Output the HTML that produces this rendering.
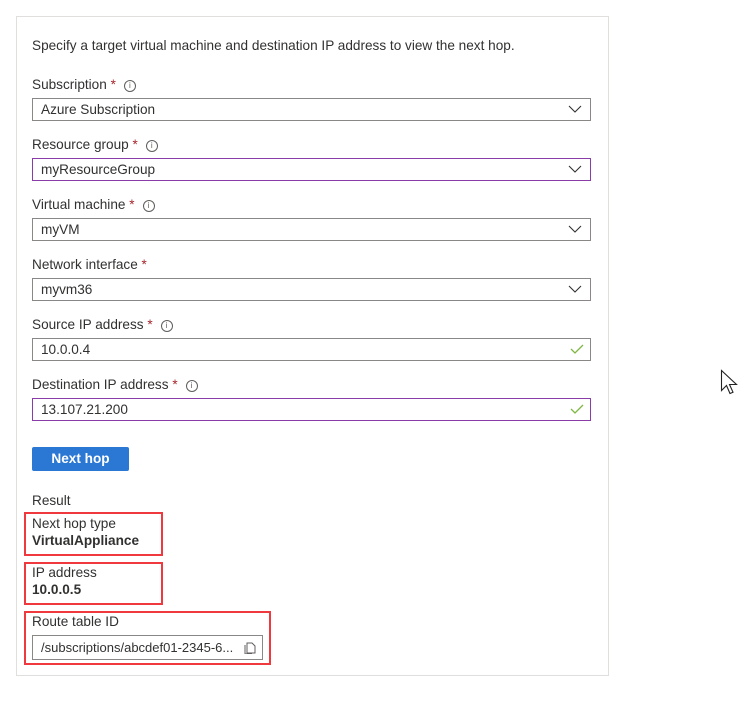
<!DOCTYPE html>
<html><head><meta charset="utf-8"><style>
body{margin:0;width:749px;height:701px;background:#fff;font-family:"Liberation Sans",sans-serif;font-size:13.6px;color:#323130;position:relative;overflow:hidden}
.a{position:absolute}
.panel{left:16px;top:16px;width:591px;height:658px;border:1px solid #e1dfdd}
.lbl{left:32px}
.req{color:#a4262c}
.info{display:inline-block;width:10px;height:10px;border:1px solid #605e5c;border-radius:50%;font-size:8px;line-height:10px;text-align:center;margin-left:8px;vertical-align:1px;color:#605e5c}
.inp{left:32px;height:21px;border:1px solid #8a8886;line-height:21px;padding-left:8px;box-sizing:content-box;width:549px}
.pur{border-color:#8a3ca8}
.chev{position:absolute;right:8px;top:5px}
.chk{position:absolute;right:6px;top:5px}
.box{border:2px solid #f0393f;box-sizing:border-box}
</style></head><body>
<div class="a panel"></div>
<div class="a lbl" style="top:38px">Specify a target virtual machine and destination IP address to view the next hop.</div>

<div class="a lbl" style="top:77px">Subscription <span class="req">*</span><span class="info">i</span></div>
<div class="a inp" style="top:98px">Azure Subscription<svg class="chev" width="14" height="10"><path d="M1 2l6 6 6-6" fill="none" stroke="#323130" stroke-width="1.1"/></svg></div>

<div class="a lbl" style="top:137px">Resource group <span class="req">*</span><span class="info">i</span></div>
<div class="a inp pur" style="top:158px">myResourceGroup<svg class="chev" width="14" height="10"><path d="M1 2l6 6 6-6" fill="none" stroke="#323130" stroke-width="1.1"/></svg></div>

<div class="a lbl" style="top:197px">Virtual machine <span class="req">*</span><span class="info">i</span></div>
<div class="a inp" style="top:218px">myVM<svg class="chev" width="14" height="10"><path d="M1 2l6 6 6-6" fill="none" stroke="#323130" stroke-width="1.1"/></svg></div>

<div class="a lbl" style="top:257px">Network interface <span class="req">*</span></div>
<div class="a inp" style="top:278px">myvm36<svg class="chev" width="14" height="10"><path d="M1 2l6 6 6-6" fill="none" stroke="#323130" stroke-width="1.1"/></svg></div>

<div class="a lbl" style="top:317px">Source IP address <span class="req">*</span><span class="info">i</span></div>
<div class="a inp" style="top:338px">10.0.0.4<svg class="chk" width="14" height="10"><path d="M1 5l4 4 8-8" fill="none" stroke="#7fb743" stroke-width="1.3"/></svg></div>

<div class="a lbl" style="top:377px">Destination IP address <span class="req">*</span><span class="info">i</span></div>
<div class="a inp pur" style="top:398px">13.107.21.200<svg class="chk" width="14" height="10"><path d="M1 5l4 4 8-8" fill="none" stroke="#7fb743" stroke-width="1.3"/></svg></div>

<div class="a" style="left:32px;top:447px;width:97px;height:24px;background:#2b78d4;color:#fff;font-weight:bold;text-align:center;line-height:24px;border-radius:2px">Next hop</div>

<div class="a lbl" style="top:493px">Result</div>
<div class="a box" style="left:24px;top:512px;width:139px;height:44px"></div>
<div class="a lbl" style="top:516px">Next hop type</div>
<div class="a lbl" style="top:533px;font-weight:bold">VirtualAppliance</div>

<div class="a box" style="left:24px;top:562px;width:139px;height:43px"></div>
<div class="a lbl" style="top:565px">IP address</div>
<div class="a lbl" style="top:582px;font-weight:bold">10.0.0.5</div>

<div class="a box" style="left:24px;top:611px;width:247px;height:54px"></div>
<div class="a lbl" style="top:614px">Route table ID</div>
<div class="a" style="left:32px;top:635px;width:221px;padding-left:8px;height:23px;line-height:23px;border:1px solid #8a8886;overflow:hidden;white-space:nowrap;font-size:13px">/subscriptions/abcdef01-2345-6...<svg style="position:absolute;right:6px;top:6px;background:#fff" width="12" height="12"><path d="M3 1h5l3 3v7H3z M1 3v9h7" fill="none" stroke="#605e5c" stroke-width="1"/></svg></div>

<svg class="a" style="left:720px;top:369px" width="20" height="28"><path d="M1.5 1.5v20l5-5 3.5 8 3-1.3-3.5-7.7h7z" fill="#fff" stroke="#222" stroke-width="1.1"/></svg>
</body></html>
